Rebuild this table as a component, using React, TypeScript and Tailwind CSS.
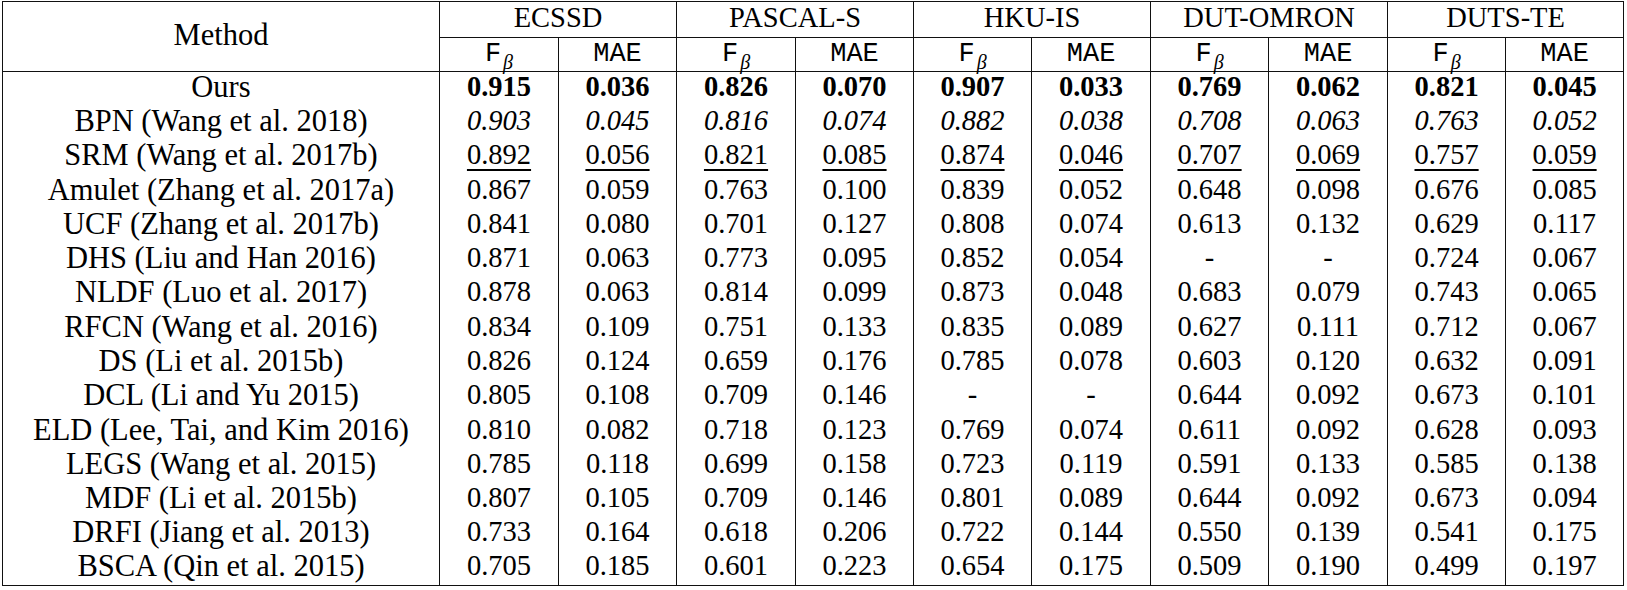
import React from "react";

type Style = "bold" | "italic" | "underline" | undefined;

const rows: [string, string[], Style][] = [
  ["Ours", ["0.915", "0.036", "0.826", "0.070", "0.907", "0.033", "0.769", "0.062", "0.821", "0.045"], "bold"],
  ["BPN (Wang et al. 2018)", ["0.903", "0.045", "0.816", "0.074", "0.882", "0.038", "0.708", "0.063", "0.763", "0.052"], "italic"],
  ["SRM (Wang et al. 2017b)", ["0.892", "0.056", "0.821", "0.085", "0.874", "0.046", "0.707", "0.069", "0.757", "0.059"], "underline"],
  ["Amulet (Zhang et al. 2017a)", ["0.867", "0.059", "0.763", "0.100", "0.839", "0.052", "0.648", "0.098", "0.676", "0.085"], undefined],
  ["UCF (Zhang et al. 2017b)", ["0.841", "0.080", "0.701", "0.127", "0.808", "0.074", "0.613", "0.132", "0.629", "0.117"], undefined],
  ["DHS (Liu and Han 2016)", ["0.871", "0.063", "0.773", "0.095", "0.852", "0.054", "-", "-", "0.724", "0.067"], undefined],
  ["NLDF (Luo et al. 2017)", ["0.878", "0.063", "0.814", "0.099", "0.873", "0.048", "0.683", "0.079", "0.743", "0.065"], undefined],
  ["RFCN (Wang et al. 2016)", ["0.834", "0.109", "0.751", "0.133", "0.835", "0.089", "0.627", "0.111", "0.712", "0.067"], undefined],
  ["DS (Li et al. 2015b)", ["0.826", "0.124", "0.659", "0.176", "0.785", "0.078", "0.603", "0.120", "0.632", "0.091"], undefined],
  ["DCL (Li and Yu 2015)", ["0.805", "0.108", "0.709", "0.146", "-", "-", "0.644", "0.092", "0.673", "0.101"], undefined],
  ["ELD (Lee, Tai, and Kim 2016)", ["0.810", "0.082", "0.718", "0.123", "0.769", "0.074", "0.611", "0.092", "0.628", "0.093"], undefined],
  ["LEGS (Wang et al. 2015)", ["0.785", "0.118", "0.699", "0.158", "0.723", "0.119", "0.591", "0.133", "0.585", "0.138"], undefined],
  ["MDF (Li et al. 2015b)", ["0.807", "0.105", "0.709", "0.146", "0.801", "0.089", "0.644", "0.092", "0.673", "0.094"], undefined],
  ["DRFI (Jiang et al. 2013)", ["0.733", "0.164", "0.618", "0.206", "0.722", "0.144", "0.550", "0.139", "0.541", "0.175"], undefined],
  ["BSCA (Qin et al. 2015)", ["0.705", "0.185", "0.601", "0.223", "0.654", "0.175", "0.509", "0.190", "0.499", "0.197"], undefined],
];

const datasets = ["ECSSD", "PASCAL-S", "HKU-IS", "DUT-OMRON", "DUTS-TE"];
const widths = [437, 119, 118, 119, 118, 118, 119, 118, 119, 118, 118];

function Value({ v, s }: { v: string; s: Style }) {
  if (v === "-") return <span>-</span>;
  if (s === "bold") return <span className="font-bold">{v}</span>;
  if (s === "italic") return <span className="italic">{v}</span>;
  if (s === "underline")
    return <span className="underline decoration-[1.5px] underline-offset-[5px]">{v}</span>;
  return <span>{v}</span>;
}

function FBeta() {
  return (
    <span className="font-['Liberation_Mono',monospace] text-[27px]">
      F
      <span className="relative top-[8px] ml-[2px] font-['Liberation_Serif',serif] text-[20px] italic">β</span>
    </span>
  );
}

export default function App() {
  return (
    <div className="min-h-[590px] w-[1627px] bg-white pl-[2px] pt-[1px] text-black">
      <table
        className="table-fixed border-collapse font-['Liberation_Serif',serif] text-[28.5px]"
        style={{ width: 1622 }}
      >
        <colgroup>
          {widths.map((w, i) => (
            <col key={i} style={{ width: w }} />
          ))}
        </colgroup>
        <thead>
          <tr className="h-[36px]">
            <th
              rowSpan={2}
              className="border border-[#111] p-0 pb-[3px] text-center align-middle text-[30.5px] font-normal leading-none"
            >
              Method
            </th>
            {datasets.map((d) => (
              <th
                key={d}
                colSpan={2}
                className="border border-[#111] p-0 pb-[2px] text-center align-middle font-normal leading-none"
              >
                {d}
              </th>
            ))}
          </tr>
          <tr className="h-[34px]">
            {datasets.map((d) => (
              <React.Fragment key={d}>
                <th className="border border-[#111] p-0 pb-[3px] text-center align-middle font-normal leading-none">
                  <FBeta />
                </th>
                <th className="border border-[#111] p-0 pb-[3px] text-center align-middle font-normal leading-none">
                  <span className="font-['Liberation_Mono',monospace] text-[27px]">MAE</span>
                </th>
              </React.Fragment>
            ))}
          </tr>
        </thead>
        <tbody>
          {rows.map(([name, vals, s], ri) => (
            <tr key={name} className="h-[34.27px]">
              <td
                className={`border-x border-[#111] p-0 pb-[3px] text-center align-middle text-[30.5px] leading-none ${
                  ri === rows.length - 1 ? "border-b" : ""
                }`}
              >
                {name}
              </td>
              {vals.map((v, i) => (
                <td
                  key={i}
                  className={`border-x border-[#111] p-0 pb-[3px] text-center align-middle leading-none ${
                    ri === rows.length - 1 ? "border-b" : ""
                  }`}
                >
                  <Value v={v} s={s} />
                </td>
              ))}
            </tr>
          ))}
        </tbody>
      </table>
    </div>
  );
}
